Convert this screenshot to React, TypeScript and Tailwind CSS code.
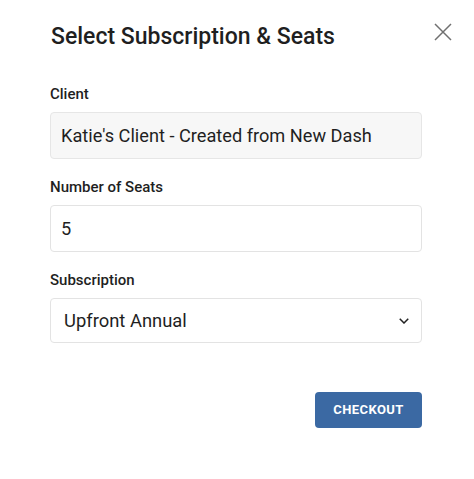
const font = { fontFamily: "Roboto, 'Liberation Sans', sans-serif" };

function Field({ label, children }: { label: string; children: React.ReactNode }) {
  return (
    <div className="flex flex-col gap-2">
      <span className="text-[15px] leading-5 font-medium text-[#1f1f1f]">{label}</span>
      {children}
    </div>
  );
}

export default function App() {
  return (
    <div className="relative h-[479px] w-[474px] bg-white" style={font}>
      <button className="absolute left-[434px] top-[23px] h-[18px] w-[18px] text-[#707070]" aria-label="Close">
        <svg viewBox="0 0 18 18" className="h-[18px] w-[18px]" fill="none" stroke="currentColor" strokeWidth="1.5">
          <path d="M1 1 L17 17 M17 1 L1 17" />
        </svg>
      </button>
      <div className="flex flex-col pl-[50px] pr-[52px] pt-[23px]">
        <h2 className="pl-px text-[23px] leading-7 font-medium text-[#1f1f1f]">Select Subscription &amp; Seats</h2>
        <div className="mt-[33px] flex flex-col gap-[18px]">
          <Field label="Client">
            <div className="flex h-[47px] items-center rounded border border-[#e6e6e6] bg-[#f7f7f7] px-[10px] text-[18.2px] text-[#1f1f1f]">
              Katie's Client - Created from New Dash
            </div>
          </Field>
          <Field label="Number of Seats">
            <div className="flex h-[47px] items-center rounded border border-[#e3e3e3] bg-white px-[10px] text-[18.2px] text-[#1f1f1f]">
              5
            </div>
          </Field>
          <Field label="Subscription">
            <div className="flex h-[45px] items-center justify-between rounded border border-[#e3e3e3] bg-white pl-[13px] pr-[12px] text-[18.4px] text-[#1f1f1f]">
              <span>Upfront Annual</span>
              <svg viewBox="0 0 10 6" className="h-[6px] w-[10px] text-[#222]" fill="none" stroke="currentColor" strokeWidth="1.5">
                <path d="M0.75 0.75 L5 5 L9.25 0.75" />
              </svg>
            </div>
          </Field>
        </div>
        <div className="mt-[49px] flex justify-end">
          <button className="h-[36px] w-[107px] rounded bg-[#3b69a3] text-[13px] font-bold tracking-[0.4px] text-white">
            CHECKOUT
          </button>
        </div>
      </div>
    </div>
  );
}
